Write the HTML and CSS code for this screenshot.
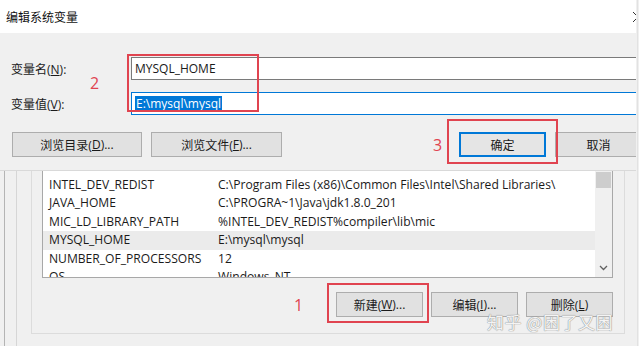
FILE: index.html
```html
<!DOCTYPE html>
<html lang="zh">
<head>
<meta charset="utf-8">
<title>编辑系统变量</title>
<link rel="stylesheet" href="styles.css">
</head>
<body>
<div class="screen">
  <div class="backwin">
    <div class="frame">
      <div class="group">
        <div class="list">
          <div class="rows">
            <div class="row"><span class="c1">INTEL_DEV_REDIST</span><span class="c2">C:\Program Files (x86)\Common Files\Intel\Shared Libraries\</span></div>
            <div class="row"><span class="c1">JAVA_HOME</span><span class="c2">C:\PROGRA~1\Java\jdk1.8.0_201</span></div>
            <div class="row"><span class="c1">MIC_LD_LIBRARY_PATH</span><span class="c2">%INTEL_DEV_REDIST%compiler\lib\mic</span></div>
            <div class="row sel"><span class="c1">MYSQL_HOME</span><span class="c2">E:\mysql\mysql</span></div>
            <div class="row"><span class="c1">NUMBER_OF_PROCESSORS</span><span class="c2">12</span></div>
            <div class="row"><span class="c1">OS</span><span class="c2">Windows_NT</span></div>
          </div>
          <div class="scrollbar">
            <div class="thumb"></div>
            <svg class="arrow" width="9" height="6" viewBox="0 0 9 6"><path d="M1 1 L4.5 4.5 L8 1" fill="none" stroke="#606060" stroke-width="1.3"/></svg>
          </div>
        </div>
        <div class="btnrow">
          <div class="btn small">新建(<u>W</u>)...</div>
          <div class="btn small">编辑(<u>I</u>)...</div>
          <div class="btn small">删除(<u>L</u>)</div>
        </div>
      </div>
    </div>
  </div>

  <div class="dialog">
    <div class="titlebar">
      <span class="title">编辑系统变量</span>
      <svg class="close" width="12" height="12" viewBox="0 0 12 12"><path d="M1 1 L11 11 M11 1 L1 11" stroke="#333" stroke-width="1"/></svg>
    </div>
    <div class="dbody">
      <div class="field">
        <span class="label">变量名(<u>N</u>):</span>
        <div class="input">MYSQL_HOME</div>
      </div>
      <div class="field second">
        <span class="label">变量值(<u>V</u>):</span>
        <div class="input focus"><span class="hl">E:\mysql\mysql</span></div>
      </div>
      <div class="dbtns">
        <div class="btn browse">浏览目录(<u>D</u>)...</div>
        <div class="btn browse">浏览文件(<u>F</u>)...</div>
        <div class="spacer"></div>
        <div class="btn small default">确定</div>
        <div class="btn small">取消</div>
      </div>
    </div>
  </div>

  <div class="mark box2"></div>
  <div class="mark box3"></div>
  <div class="mark box1"></div>
  <span class="num n2">2</span>
  <span class="num n3">3</span>
  <span class="num n1">1</span>
  <div class="watermark">知乎 @困了又困</div>
</div>
</body>
</html>
```

FILE: styles.css
```css
* { box-sizing: border-box; }
html, body { margin: 0; padding: 0; }
body {
  background: #ffffff;
  font-family: "Open Sans", "Noto Sans CJK SC", sans-serif;
  font-size: 12px;
  color: #000;
}
u { text-decoration: underline; text-underline-offset: 1px; }

.screen {
  position: relative;
  width: 639px;
  height: 346px;
  overflow: hidden;
  background: #f0f0f0;
}

/* background window */
.backwin {
  height: 346px;
  margin-left: 4px;
  border-left: 1px solid #b4b4b4;
}
.frame {
  height: 346px;
  margin-left: 11px;
  border-left: 1px solid #d6d6d6;
  padding-right: 6px;
  border-right: 1px solid #e2e2e2;
  width: 622px;
}
.group {
  margin-left: 14px;
  width: 594px;
  height: 334px;
  border-left: 1px solid #dcdcdc;
  border-right: 1px solid #dcdcdc;
  border-bottom: 1px solid #dcdcdc;
  padding-top: 160px;
  padding-left: 10px;
}
.list {
  display: flex;
  width: 571px;
  height: 118px;
  background: #fff;
  border: 1px solid #a8a8a8;
  border-top: none;
  overflow: hidden;
}
.rows {
  flex: 1;
  padding-top: 15.5px;
  overflow: hidden;
}
.row {
  display: flex;
  height: 18.6px;
  line-height: 18.6px;
  white-space: nowrap;
  font-size: 12.1px;
  color: #1a1a1a;
}
.row.sel { background: #ebebeb; }
.c1 { width: 175px; padding-left: 6px; flex: none; }
.c2 { flex: none; }
.scrollbar {
  width: 17px;
  flex: none;
  background: #f0f0f0;
  display: flex;
  flex-direction: column;
  align-items: center;
  justify-content: space-between;
  padding: 12px 0 4px;
}
.thumb {
  width: 15px;
  height: 16px;
  background: #cdcdcd;
}
.arrow { margin-bottom: 2px; }

.btnrow {
  display: flex;
  justify-content: flex-end;
  gap: 8px;
  width: 571px;
  margin-top: 14px;
}

.btn {
  height: 25px;
  background: #e1e1e1;
  border: 1px solid #adadad;
  display: flex;
  align-items: center;
  justify-content: center;
  font-size: 12px;
  color: #1a1a1a;
  white-space: nowrap;
  flex: none;
}
.btn.small { width: 87px; }
.btn.browse { width: 130px; }
.btn.default {
  border: 2px solid #0078d7;
  background: #e5e5e5;
}

/* front dialog */
.dialog {
  position: absolute;
  left: 0;
  top: 0;
  width: 636px;
  height: 171px;
  background: #f0f0f0;
  border-bottom: 1px solid #d9d9d9;
  overflow: hidden;
}
.titlebar {
  height: 33px;
  background: #fff;
  display: flex;
  align-items: center;
  padding-left: 6px;
  position: relative;
}
.title { font-size: 12px; color: #111; }
.close { position: absolute; left: 632px; top: 11px; }
.dbody {
  padding: 24px 0 0 11px;
}
.field {
  display: flex;
  align-items: center;
  height: 23px;
}
.field.second { margin-top: 12px; }
.label { width: 120px; flex: none; font-size: 12px; color: #1a1a1a; }
.input {
  width: 520px;
  height: 23px;
  flex: none;
  background: #fff;
  border: 1px solid #7a7a7a;
  display: flex;
  align-items: center;
  padding-left: 3px;
  font-size: 12px;
  color: #1a1a1a;
}
.input.focus { border-color: #0078d7; }
.hl {
  background: #0078d7;
  color: #fff;
  line-height: 16px;
  padding: 0 1px;
}
.dbtns {
  display: flex;
  gap: 9px;
  margin-top: 17px;
  margin-left: 1px;
}
.dbtns .btn.browse + .btn.browse { width: 131px; }
.spacer { width: 159px; flex: none; }
.dbtns .btn.small { width: 87px; }

/* annotations */
.mark {
  position: absolute;
  border: 2px solid #e04450;
}
.box2 { left: 127px; top: 54px; width: 132px; height: 58px; }
.box3 { left: 447px; top: 119px; width: 111px; height: 45px; }
.box1 { left: 327px; top: 283px; width: 102px; height: 40px; }
.num {
  position: absolute;
  color: #e04450;
  font-family: "Open Sans", sans-serif;
  font-size: 16px;
  line-height: 16px;
}
.n2 { left: 90px; top: 75px; }
.n3 { left: 433px; top: 137px; }
.n1 { left: 294px; top: 297px; }

.watermark {
  position: absolute;
  left: 487px;
  top: 311px;
  font-family: "Noto Sans CJK SC", sans-serif;
  font-size: 17px;
  line-height: 22px;
  color: rgba(255,255,255,0.92);
  text-shadow: 0 0 1px #8a8a8a, 0 0 1px #8a8a8a;
  letter-spacing: 0.5px;
  white-space: nowrap;
}
```
